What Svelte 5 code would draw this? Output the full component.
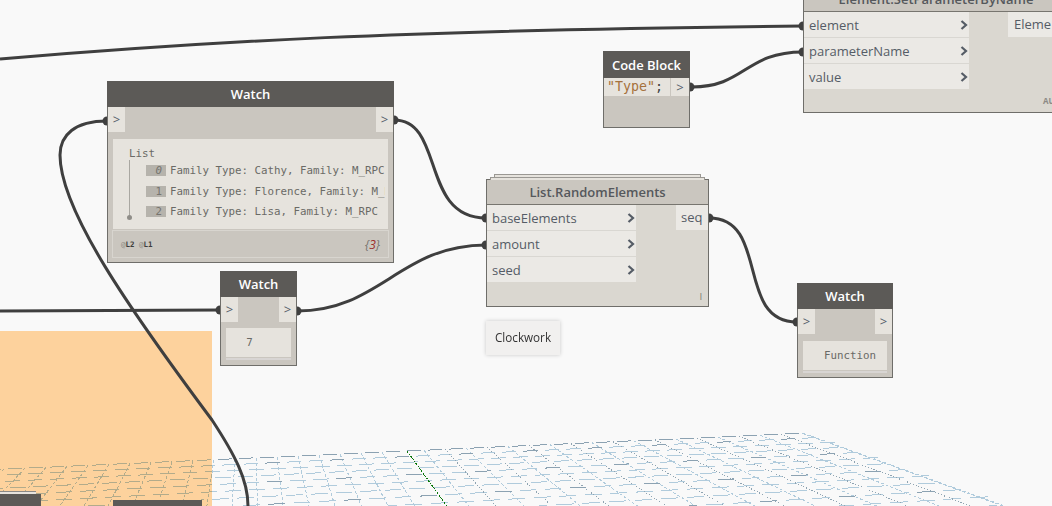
<script>
  // Ground grid of the 3D background, projected by hand from two vanishing points
  const VP1 = [249, 233]
  const VP2 = [5250, 233]

  function cross(a, b, c, d) {
    const den = (a[0] - b[0]) * (c[1] - d[1]) - (a[1] - b[1]) * (c[0] - d[0])
    const p = a[0] * b[1] - a[1] * b[0]
    const q = c[0] * d[1] - c[1] * d[0]
    return [(p * (c[0] - d[0]) - (a[0] - b[0]) * q) / den, (p * (c[1] - d[1]) - (a[1] - b[1]) * q) / den]
  }
  const edge = (c) => [c, 451 - 0.045 * (c - 407)]
  const rowY = (k) => 233 + 218 / (1 - k * 0.024)
  const point = (c, k) => {
    const y = rowY(k)
    return cross(VP1, edge(c), VP2, [407 + 0.727 * (y - 451), y])
  }
  const seg = (a, b) => `M${a[0].toFixed(1)} ${a[1].toFixed(1)}L${b[0].toFixed(1)} ${b[1].toFixed(1)}`

  let light = ''
  let dark = ''
  for (let k = 0; k < 17; k++) {
    for (let j = -22; j < 20; j++) {
      const c = 407 + j * 21 + (k % 3) * 5
      if (c > 795) continue
      const s = seg(point(c, k), point(c + 14, k))
      // sul lato arancione niente tratti scuri
      if (c > 215 && (k === 0 || (k % 3 === 1 && (j + k) % 3 === 0))) dark += s
      else light += s
    }
  }
  let minor = ''
  let major = ''
  for (let j = -24; j < 24; j++) {
    const c = 403 + j * 21
    if (c > 804) continue
    const s = seg(edge(c), point(c, 18))
    if (j % 2 === 0 && j > 0) major += s
    else if (j !== 0) minor += s
  }
  minor += seg(edge(803), point(803, 18))
  const green = seg(edge(407), point(407, 18))

  const wires = [
    'M0 59C200 42 400 30 803 26',
    'M803 52C745 52 745 87 692 87',
    'M107 121C75 121 60 135 60 155C60 210 130 310 212 420C235 455 248 480 248 506',
    'M394 120C445 120 420 218 486 218',
    'M0 311L220 310',
    'M297 311C380 311 400 245 486 245',
    'M709 218C770 218 735 322 797 322',
  ]
  const dots = [[803, 26], [803, 52], [690, 87], [107, 121], [394, 120], [486, 218], [220, 310], [297, 311], [486, 245], [709, 218], [797, 322]]

  const items = [
    { i: '0', text: 'Family Type: Cathy, Family: M_RPC', first: true },
    { i: '1', text: 'Family Type: Florence, Family: M_RPC' },
    { i: '2', text: 'Family Type: Lisa, Family: M_RPC' },
  ]
</script>

{#snippet watchHead()}
  <div class="head dark">Watch</div>
  <div class="ports">
    <span class="port">&gt;</span>
    <span class="port">&gt;</span>
  </div>
{/snippet}

{#snippet chevron()}
  <svg class="chev" width="8" height="10" viewBox="0 0 8 10"><path d="M1.5 1L6 5L1.5 9" /></svg>
{/snippet}

{#snippet inputs(names)}
  <div class="inputs">
    {#each names as name}
      <div class="input"><span>{name}</span>{@render chevron()}</div>
    {/each}
  </div>
{/snippet}

<main class="canvas">
  <div class="peach"></div>

  <svg class="ground" width="1052" height="506" shape-rendering="crispEdges">
    <path d={minor} class="minor" />
    <path d={light} class="light" />
    <path d={major} class="major" />
    <path d={dark} class="darker" />
    <path d={green} class="green" />
  </svg>

  <div class="stub one"></div>
  <div class="stub two"></div>

  <svg class="wires" width="1052" height="506">
    {#each wires as d}
      <path {d} />
    {/each}
    {#each dots as [cx, cy]}
      <circle {cx} {cy} r="4.5" />
    {/each}
  </svg>

  <div class="node set">
    <div class="head light-head">Element.SetParameterByName</div>
    <div class="columns">
      {@render inputs(['element', 'parameterName', 'value'])}
      <div class="output">Eleme</div>
    </div>
    <div class="lacing auto">AU</div>
  </div>

  <div class="node code">
    <div class="head dark">Code Block</div>
    <div class="code-row">
      <span class="code-text"><b>"Type"</b>;</span>
      <span class="port">&gt;</span>
    </div>
  </div>

  <div class="node watch big">
    {@render watchHead()}
    <div class="panel list">
      <div class="list-title">List</div>
      <div class="tree"><i></i></div>
      {#each items as item}
        <div class="item">
          <span class="index" class:first={item.first}>{item.i}</span>
          <span class="label">{item.text}</span>
        </div>
      {/each}
    </div>
    <div class="foot">
      <span class="levels"><em>@</em>L2 <em>@</em>L1</span>
      <span class="count">{'{'}<b>3</b>{'}'}</span>
    </div>
  </div>

  <div class="node watch small">
    {@render watchHead()}
    <div class="panel value">7</div>
    <div class="rule"></div>
  </div>

  <div class="node watch func">
    {@render watchHead()}
    <div class="panel value">Function</div>
    <div class="rule"></div>
  </div>

  <div class="node random">
    <div class="stack s1"></div>
    <div class="stack s2"></div>
    <div class="head light-head">List.RandomElements</div>
    <div class="columns">
      {@render inputs(['baseElements', 'amount', 'seed'])}
      <div class="output">seq</div>
    </div>
    <div class="lacing tick">l</div>
  </div>

  <div class="tooltip">Clockwork</div>
</main>

<style>
  :global(body) {
    margin: 0;
    background: #f9f9f9;
  }

  .canvas {
    position: relative;
    width: 1052px;
    height: 506px;
    overflow: hidden;
    background: #f9f9f9;
    font-family: 'Open Sans', sans-serif;
  }

  .peach {
    position: absolute;
    left: 0;
    top: 331px;
    width: 212px;
    height: 175px;
    background: #fdd29d;
  }

  .ground,
  .wires {
    position: absolute;
    left: 0;
    top: 0;
  }
  .ground {
    mix-blend-mode: multiply;
  }
  .ground path {
    fill: none;
    stroke-width: 1;
  }
  .ground .light {
    stroke: #b4d0e2;
  }
  .ground .darker {
    stroke: #8fa6b6;
  }
  .ground .minor {
    stroke: #b4d0e2;
    stroke-dasharray: 3 2;
  }
  .ground .major {
    stroke: #93a8b6;
    stroke-dasharray: 1 2;
  }
  .ground .green {
    stroke: #0a7a0a;
    stroke-dasharray: 2 1;
  }

  .wires path {
    fill: none;
    stroke: #3f3f3f;
    stroke-width: 3;
  }
  .wires circle {
    fill: #3f3f3f;
  }

  .stub {
    position: absolute;
    background: #5c5a57;
  }
  .stub.one {
    left: 0;
    top: 494px;
    width: 41px;
    height: 12px;
    box-shadow: -4px -3px 0 -1px #e6e3dd, -4px -4px 0 -1px #8a8986;
  }
  .stub.two {
    left: 113px;
    top: 500px;
    width: 89px;
    height: 6px;
  }

  .node {
    position: absolute;
    box-sizing: border-box;
    border: 1px solid #6f6e6a;
    display: flex;
    flex-direction: column;
  }
  .head {
    flex: none;
    text-align: center;
    font-size: 13px;
    font-weight: 600;
    white-space: nowrap;
  }
  .head.dark {
    height: 26px;
    margin: -1px -1px 0;
    line-height: 27px;
    background: #5c5a57;
    color: #fff;
  }
  .head.light-head {
    height: 24px;
    line-height: 24px;
    background: #cac6bf;
    color: #55585c;
    border-bottom: 1px solid #77756f;
  }

  .watch {
    background: #cac6bf;
  }
  .big {
    left: 107px;
    top: 81px;
    width: 287px;
    height: 182px;
  }
  .small {
    left: 220px;
    top: 271px;
    width: 77px;
    height: 95px;
  }
  .func {
    left: 797px;
    top: 283px;
    width: 96px;
    height: 95px;
  }

  .ports {
    flex: none;
    display: flex;
    justify-content: space-between;
    height: 25px;
  }
  .port {
    width: 17px;
    background: #e6e3dd;
    color: #55606b;
    font-size: 13px;
    line-height: 25px;
    text-align: center;
  }

  .panel {
    background: #e6e3dd;
    color: #6a6a66;
    font-family: 'DejaVu Sans Mono', monospace;
    font-size: 10.8px;
  }
  .list {
    position: relative;
    height: 90px;
    margin: 7px 5px 0;
    overflow: hidden;
  }
  .list-title {
    position: absolute;
    left: 16px;
    top: 8px;
    line-height: 14px;
  }
  .tree {
    position: absolute;
    left: 16px;
    top: 21px;
    width: 1px;
    height: 58px;
    background: #a9a7a1;
  }
  .tree i {
    position: absolute;
    left: -2px;
    bottom: -2px;
    width: 5px;
    height: 5px;
    border-radius: 50%;
    background: #8f8d88;
  }
  .item {
    position: absolute;
    left: 33px;
    display: flex;
    align-items: center;
    gap: 4px;
    height: 14px;
    white-space: nowrap;
  }
  .item:nth-of-type(3) {
    top: 24px;
  }
  .item:nth-of-type(4) {
    top: 45px;
  }
  .item:nth-of-type(5) {
    top: 65px;
  }
  .index {
    width: 20px;
    height: 11px;
    line-height: 11px;
    padding-right: 4px;
    box-sizing: border-box;
    text-align: right;
    background: #b6b3ac;
    color: #77756f;
  }
  .index.first {
    font-style: italic;
  }
  .label {
    width: 215px;
    overflow: hidden;
  }

  .foot {
    display: flex;
    align-items: center;
    justify-content: space-between;
    box-sizing: border-box;
    height: 28px;
    margin: 1px 4px 0;
    padding: 0 8px;
    border: 1px solid #d8d5cf;
    font-family: 'DejaVu Sans Mono', monospace;
  }
  .levels {
    font-size: 7.5px;
    font-weight: 700;
    color: #3e3e3c;
  }
  .levels em {
    font-style: normal;
    font-weight: 400;
    color: #8a8780;
  }
  .count {
    font-family: 'Open Sans', sans-serif;
    font-size: 12px;
    font-style: italic;
    color: #77756f;
  }
  .count b {
    font-weight: 400;
    color: #9c2b2b;
  }

  .value {
    height: 29px;
    margin: 6px 5px 0;
    line-height: 29px;
    text-align: center;
  }
  .small .value {
    padding-right: 18px;
  }
  .func .value {
    margin-top: 7px;
    padding-left: 10px;
  }
  .rule {
    height: 2px;
    margin: 1px 5px 0;
    background: #d8d5d3;
  }

  .set,
  .random {
    background: #dad7d0;
  }
  .set {
    left: 803px;
    top: -14px;
    width: 266px;
    height: 127px;
  }
  .random {
    left: 486px;
    top: 179px;
    width: 223px;
    height: 128px;
  }
  .stack {
    position: absolute;
    box-sizing: border-box;
    height: 5px;
    border: 1px solid #9a9893;
    border-bottom: 0;
    background: #e6e3dd;
  }
  .stack.s1 {
    left: 7px;
    right: 7px;
    top: -6px;
  }
  .stack.s2 {
    left: 3px;
    right: 3px;
    top: -3px;
    height: 3px;
  }

  .columns {
    display: flex;
    justify-content: space-between;
    align-items: flex-start;
  }
  .inputs {
    display: flex;
    flex-direction: column;
    gap: 1px;
    background: #d9d7d2;
  }
  .input {
    display: flex;
    align-items: center;
    justify-content: space-between;
    box-sizing: border-box;
    height: 25px;
    padding: 0 0 0 5px;
    background: #ebe9e5;
    color: #555c66;
    font-size: 13px;
  }
  .random .inputs {
    width: 149px;
  }
  .set .inputs {
    width: 165px;
  }
  .chev {
    margin-right: 1px;
  }
  .chev path {
    fill: none;
    stroke: #555c66;
    stroke-width: 2.2;
  }
  .output {
    box-sizing: border-box;
    height: 25px;
    line-height: 25px;
    padding: 0 5px;
    background: #ebe9e5;
    color: #555c66;
    font-size: 13px;
  }
  .set .output {
    width: 60px;
    padding-left: 6px;
  }
  .random .output {
    width: 32px;
  }

  .lacing {
    position: absolute;
    font-weight: 700;
    color: #8c8a85;
    line-height: 10px;
  }
  .auto {
    left: 239px;
    bottom: 6px;
    font-size: 8px;
  }
  .tick {
    right: 6px;
    bottom: 4px;
    font-size: 9px;
    font-weight: 400;
    color: #7a746c;
  }

  .code {
    left: 603px;
    top: 51px;
    width: 87px;
    height: 77px;
    background: #cac6bf;
  }
  .code .head.dark {
    height: 27px;
    line-height: 29px;
  }
  .code-row {
    display: flex;
    justify-content: space-between;
    height: 18px;
  }
  .code-text {
    flex: 1;
    box-sizing: border-box;
    padding-left: 3px;
    margin-right: 1px;
    background: #e6e3dd;
    color: #3f3f3f;
    font-family: 'DejaVu Sans Mono', monospace;
    font-size: 13.3px;
    line-height: 18px;
  }
  .code-text b {
    font-weight: 400;
    color: #a5713c;
  }
  .code .port {
    width: 18px;
    line-height: 18px;
  }

  .tooltip {
    position: absolute;
    left: 486px;
    top: 321px;
    box-sizing: border-box;
    width: 74px;
    height: 34px;
    line-height: 33px;
    text-align: center;
    background: #f1f0ef;
    color: #333;
    font-size: 11.7px;
    box-shadow: 0 0 4px rgba(0, 0, 0, 0.2);
  }
</style>
